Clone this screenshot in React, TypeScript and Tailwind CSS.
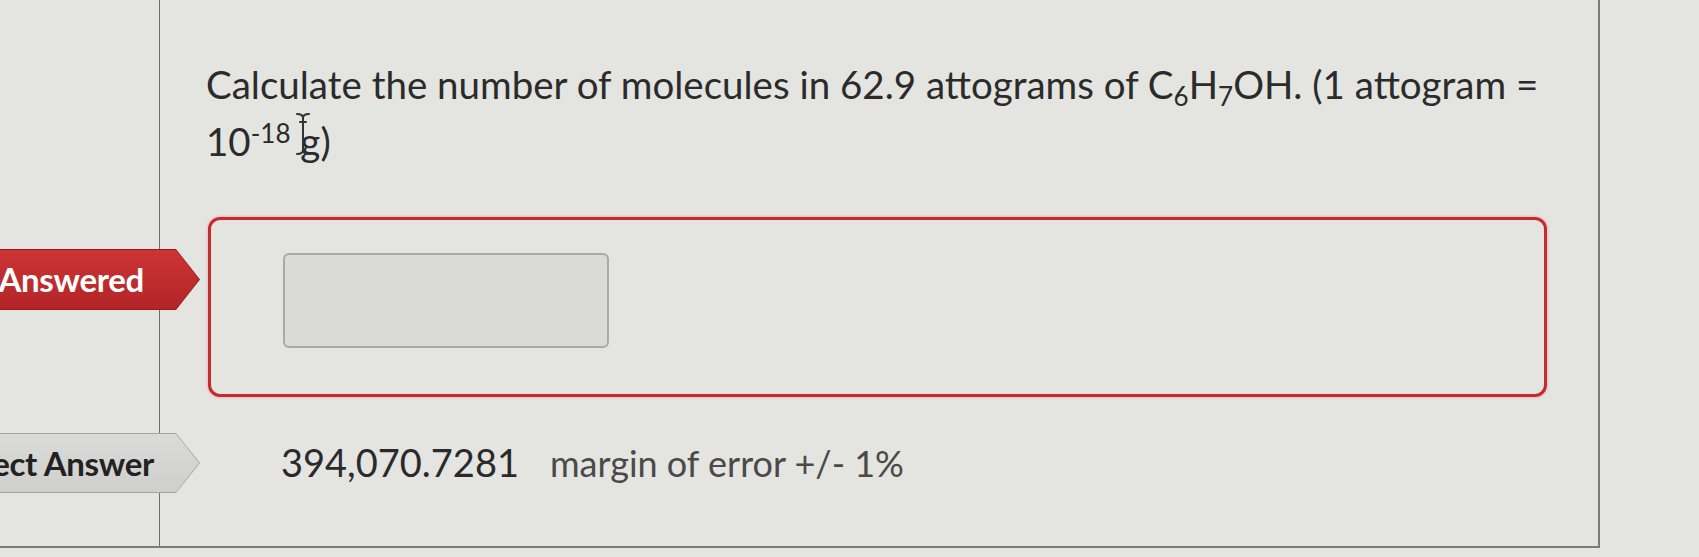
import React from 'react';

const FONT = { fontFamily: 'Lato, "Open Sans", "Liberation Sans", sans-serif' };

function IBeam() {
  return (
    <svg
      className="absolute left-[-6px] top-[-6px]"
      width="18"
      height="44"
      viewBox="0 0 18 44"
      fill="none"
    >
      <path
        d="M3 2c3 0 6 1 6 4v32c0 3-3 4-6 4M15 2c-3 0-6 1-6 4M15 42c-3 0-6-1-6-4M6 10h6"
        stroke="#333"
        strokeWidth="2"
        strokeLinecap="round"
      />
    </svg>
  );
}

function Tag({ label, tone }: { label: string; tone: 'red' | 'gray' }) {
  const red = tone === 'red';
  return (
    <div
      className={`mr-[-41px] w-[300px] shrink-0 p-[1px] [clip-path:polygon(0_0,calc(100%-24px)_0,100%_50%,calc(100%-24px)_100%,0_100%)] ${
        red ? 'h-[61px] bg-[#8e1d20]' : 'h-[60px] bg-[#a3a3a1]'
      }`}
    >
      <div
        className={`flex h-full items-center justify-end [clip-path:polygon(0_0,calc(100%-23px)_0,100%_50%,calc(100%-23px)_100%,0_100%)] ${
          red
            ? 'bg-gradient-to-b from-[#cc3534] to-[#b32428] pr-[55px] text-white'
            : 'bg-gradient-to-b from-[#dadad8] to-[#cfcfcd] pr-[45px] text-[#222]'
        }`}
      >
        <span className="whitespace-nowrap text-[33px] font-bold leading-none tracking-[-0.3px]">
          {label}
        </span>
      </div>
    </div>
  );
}

export default function App() {
  return (
    <div className="flex h-[557px] w-[1699px] overflow-hidden bg-[#e4e4e1] text-[#2b2b2b]" style={FONT}>
      <div className="grid h-[548px] w-[1600px] shrink-0 grid-cols-[160px_1fr] grid-rows-[210px_200px_1fr] border-r-2 border-b-2 border-[#7c7c7a]">
        {/* Question */}
        <div className="border-r border-[#6e6e6c]" />
        <div className="pl-[46px] pr-[24px] pt-[56px]">
          <p className="text-[38.5px] leading-[57px]">
            Calculate the number of molecules in 62.9 attograms of C
            <sub className="text-[26px]">6</sub>H<sub className="text-[26px]">7</sub>OH. (1 attogram ={' '}
            10<sup className="text-[26px]">-18</sup>{' '}
            <span className="relative">
              <IBeam />g
            </span>
            )
          </p>
        </div>

        {/* Answered */}
        <div className="flex items-start justify-end border-r border-[#6e6e6c] pt-[39px]">
          <Tag label="Answered" tone="red" />
        </div>
        <div className="pl-[48px] pr-[51px] pt-[7px]">
          <div className="h-[180px] rounded-[12px] border-[3px] border-[#c42a2e] pl-[72px] pt-[33px] shadow-[0_0_3px_rgba(230,90,90,0.5)]">
            <div className="h-[95px] w-[326px] rounded-[6px] border-2 border-[#a9a9a7] bg-[#dadad8]" />
          </div>
        </div>

        {/* Correct answer */}
        <div className="flex items-start justify-end border-r border-[#6e6e6c] pt-[23px]">
          <Tag label="Correct Answer" tone="gray" />
        </div>
        <div className="flex items-baseline gap-[31px] pl-[121px] pt-[30px] leading-[44px]">
          <span className="text-[38px] text-[#2a2a2a]">394,070.7281</span>
          <span className="text-[36px] text-[#4a4a4a]">margin of error +/- 1%</span>
        </div>
      </div>
      <div className="flex-1" />
    </div>
  );
}
